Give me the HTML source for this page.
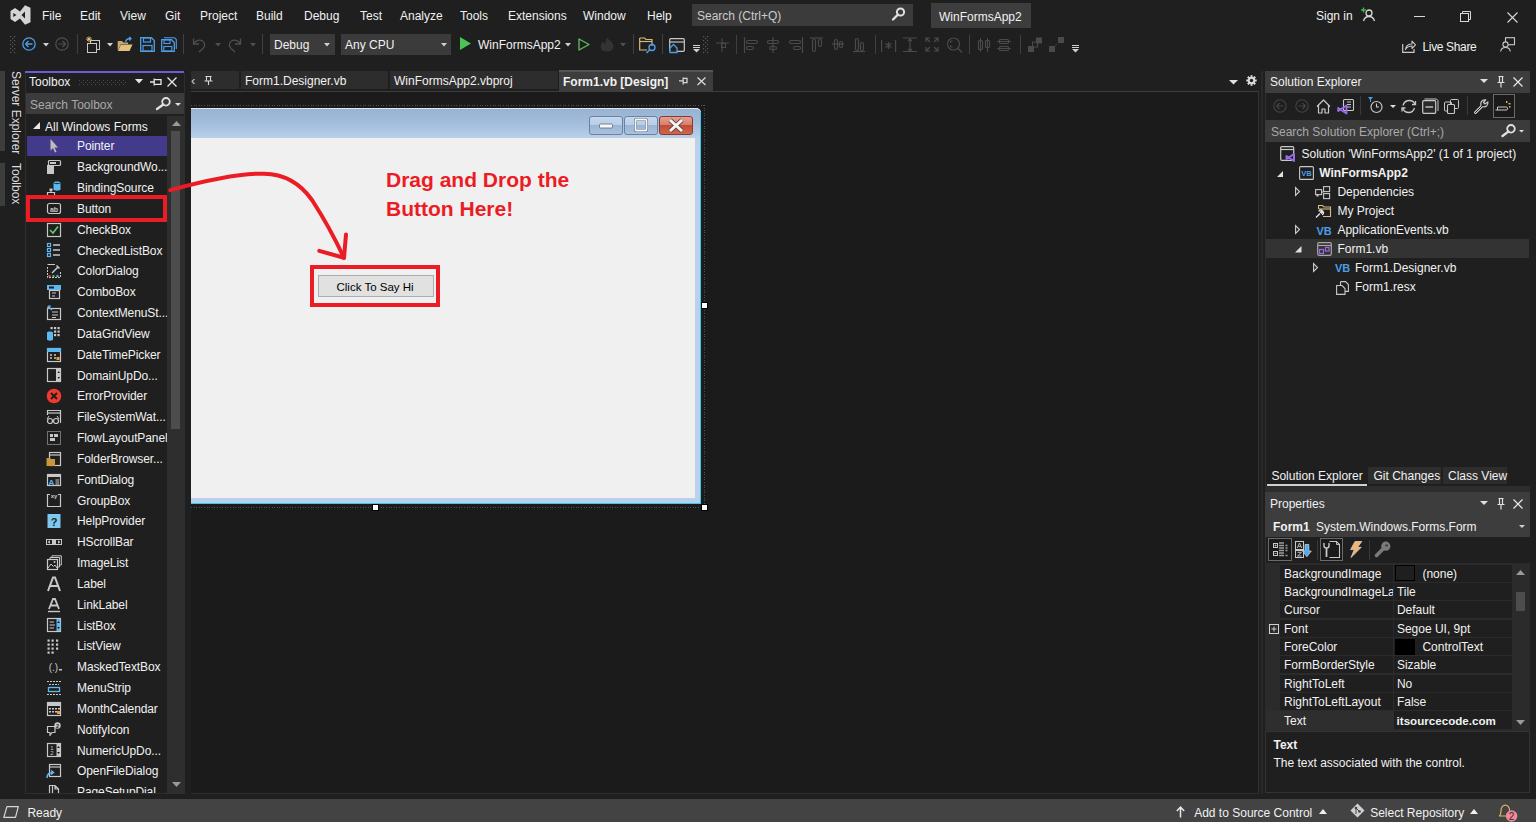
<!DOCTYPE html>
<html><head><meta charset="utf-8">
<style>
*{margin:0;padding:0;box-sizing:border-box}
html,body{width:1536px;height:822px;overflow:hidden;background:#1f1f1f}
body{position:relative;font-family:"Liberation Sans",sans-serif;font-size:12px;color:#f1f1f1}
.a{position:absolute}
.t{position:absolute;white-space:pre;line-height:16px;font-size:12px}
svg{position:absolute;overflow:visible}
</style></head><body>
<svg style="left:10px;top:5px" width="21" height="20" viewBox="0 0 21 20"><path d="M0.5 6 L5 3 L10 6.5 L15 0.3 L20.5 2.8 V17.2 L15 19.7 L10 13.5 L5 17 L0.5 14 Z M3.3 8 V12 L6.5 10 Z M15 6.5 L11.5 10 L15 13.5 Z" fill="#d4d4d4" fill-rule="evenodd"/></svg>
<span class="t" style="left:42px;top:7.84px">File</span>
<span class="t" style="left:80px;top:7.84px">Edit</span>
<span class="t" style="left:120px;top:7.84px">View</span>
<span class="t" style="left:165px;top:7.84px">Git</span>
<span class="t" style="left:200px;top:7.84px">Project</span>
<span class="t" style="left:256px;top:7.84px">Build</span>
<span class="t" style="left:304px;top:7.84px">Debug</span>
<span class="t" style="left:360px;top:7.84px">Test</span>
<span class="t" style="left:400px;top:7.84px">Analyze</span>
<span class="t" style="left:460px;top:7.84px">Tools</span>
<span class="t" style="left:508px;top:7.84px">Extensions</span>
<span class="t" style="left:583px;top:7.84px">Window</span>
<span class="t" style="left:647px;top:7.84px">Help</span>
<div class="a" style="left:692px;top:4px;width:221px;height:22px;background:#3b3b3b;"></div>
<span class="t" style="left:697px;top:7.84px;color:#cccccc">Search (Ctrl+Q)</span>
<svg style="left:891px;top:7px" width="15" height="14" viewBox="0 0 15 14"><circle cx="9.5" cy="5" r="3.6" fill="none" stroke="#e0e0e0" stroke-width="2"/><path d="M7 7.5 L2 12.5" stroke="#e0e0e0" stroke-width="2.4" stroke-linecap="round"/></svg>
<div class="a" style="left:931px;top:3px;width:100px;height:25px;background:#3d3d3d;"></div>
<span class="t" style="left:939px;top:8.84px">WinFormsApp2</span>
<span class="t" style="left:1316px;top:7.84px">Sign in</span>
<svg style="left:1360px;top:6px" width="16" height="16" viewBox="0 0 16 16"><circle cx="9" cy="7" r="3" fill="none" stroke="#d8d8d8" stroke-width="1.3"/><path d="M3.5 15 C4.5 11.5 6.5 10.5 9 10.5 C11.5 10.5 13.5 11.5 14.5 15" fill="none" stroke="#d8d8d8" stroke-width="1.3"/><path d="M1 4 H6 M3.5 1.5 V6.5" stroke="#3dba4e" stroke-width="1.3"/></svg>
<div class="a" style="left:1414px;top:16px;width:11px;height:1px;background:#d8d8d8;"></div>
<svg style="left:1460px;top:11px" width="12" height="11" viewBox="0 0 12 11"><rect x="0.5" y="2.5" width="8" height="8" fill="none" stroke="#d8d8d8"/><path d="M2.5 2.5 V0.5 H10.5 V8.5 H8.5" fill="none" stroke="#d8d8d8"/></svg>
<svg style="left:1507px;top:12px" width="11" height="11" viewBox="0 0 11 11"><path d="M0.5 0.5 L10.5 10.5 M10.5 0.5 L0.5 10.5" stroke="#d8d8d8" stroke-width="1.1"/></svg>
<svg style="left:10px;top:36px" width="6" height="18" viewBox="0 0 6 18"><rect x="0" y="0" width="1.2" height="1.2" fill="#5a5a5a"/><rect x="4" y="0" width="1.2" height="1.2" fill="#5a5a5a"/><rect x="0" y="4" width="1.2" height="1.2" fill="#5a5a5a"/><rect x="4" y="4" width="1.2" height="1.2" fill="#5a5a5a"/><rect x="0" y="8" width="1.2" height="1.2" fill="#5a5a5a"/><rect x="4" y="8" width="1.2" height="1.2" fill="#5a5a5a"/><rect x="0" y="12" width="1.2" height="1.2" fill="#5a5a5a"/><rect x="4" y="12" width="1.2" height="1.2" fill="#5a5a5a"/><rect x="0" y="16" width="1.2" height="1.2" fill="#5a5a5a"/><rect x="4" y="16" width="1.2" height="1.2" fill="#5a5a5a"/><rect x="2" y="2" width="1.2" height="1.2" fill="#5a5a5a"/><rect x="2" y="6" width="1.2" height="1.2" fill="#5a5a5a"/><rect x="2" y="10" width="1.2" height="1.2" fill="#5a5a5a"/><rect x="2" y="14" width="1.2" height="1.2" fill="#5a5a5a"/></svg>
<svg style="left:22px;top:37px" width="14" height="14" viewBox="0 0 14 14"><circle cx="7" cy="7" r="6.2" fill="none" stroke="#4c9ee8" stroke-width="1.3"/><path d="M3.5 7 H10.5 M3.5 7 L6.5 4 M3.5 7 L6.5 10" stroke="#4c9ee8" stroke-width="1.3" fill="none"/></svg>
<svg style="left:43px;top:43px" width="6" height="4" viewBox="0 0 6 4"><path d="M0 0 H6 L3 3.5 Z" fill="#d0d0d0"/></svg>
<svg style="left:55px;top:37px" width="14" height="14" viewBox="0 0 14 14"><circle cx="7" cy="7" r="6.2" fill="none" stroke="#4f4f4f" stroke-width="1.2"/><path d="M3.5 7 H10.5 M10.5 7 L7.5 4 M10.5 7 L7.5 10" stroke="#4f4f4f" stroke-width="1.2" fill="none"/></svg>
<div class="a" style="left:77px;top:34px;width:1px;height:20px;background:#404040;"></div>
<svg style="left:85px;top:36px" width="17" height="17" viewBox="0 0 17 17"><rect x="5.5" y="4.5" width="9" height="9" fill="#1f1f1f" stroke="#c8c8c8"/><rect x="2.5" y="7.5" width="9" height="9" fill="#1f1f1f" stroke="#c8c8c8"/><path d="M4 0.5 V6 M1.2 3.2 H6.8 M2 1.2 L6 5.2 M6 1.2 L2 5.2" stroke="#e8c36a" stroke-width="1"/></svg>
<svg style="left:107px;top:43px" width="6" height="4" viewBox="0 0 6 4"><path d="M0 0 H6 L3 3.5 Z" fill="#d0d0d0"/></svg>
<svg style="left:117px;top:37px" width="16" height="15" viewBox="0 0 16 15"><path d="M0.7 4 H5 L6.5 5.5 H11 V7 H4 L1 13.5 H0.7 Z" fill="#c9a86b"/><path d="M1 14 L4 7.5 H15.5 L12.5 14 Z" fill="#e2c07f"/><path d="M8.5 5 C9 2.5 11 1.5 13.5 1.5 M12 0 L14 1.5 L12.5 3.5" fill="none" stroke="#4c9ee8" stroke-width="1.3"/></svg>
<svg style="left:140px;top:37px" width="15" height="15" viewBox="0 0 15 15"><path d="M0.7 0.7 H11.5 L14.3 3.5 V14.3 H0.7 Z" fill="none" stroke="#4c9ee8" stroke-width="1.3"/><rect x="3.5" y="1" width="7" height="4" fill="none" stroke="#4c9ee8" stroke-width="1.2"/><rect x="3" y="8.5" width="9" height="5.5" fill="none" stroke="#4c9ee8" stroke-width="1.2"/></svg>
<svg style="left:161px;top:37px" width="16" height="15" viewBox="0 0 16 15"><path d="M3 0.7 H13.5 L15.3 2.5 V12" fill="none" stroke="#4c9ee8" stroke-width="1.1"/><path d="M0.7 2.7 H10.5 L13.3 5.5 V14.3 H0.7 Z" fill="none" stroke="#4c9ee8" stroke-width="1.3"/><rect x="3" y="3" width="6" height="3.5" fill="none" stroke="#4c9ee8" stroke-width="1.1"/><rect x="2.8" y="9.5" width="8" height="4.5" fill="none" stroke="#4c9ee8" stroke-width="1.1"/></svg>
<div class="a" style="left:183px;top:34px;width:1px;height:20px;background:#404040;"></div>
<svg style="left:192px;top:37px" width="14" height="15" viewBox="0 0 14 15"><path d="M1.5 1.5 V7 H7" fill="none" stroke="#4f4f4f" stroke-width="1.3"/><path d="M1.5 7 C4 3 8 2.5 10.5 4 C13.5 6 13 9.5 11 11.5 L7 15" fill="none" stroke="#4f4f4f" stroke-width="1.3"/></svg>
<svg style="left:215px;top:43px" width="6" height="4" viewBox="0 0 6 4"><path d="M0 0 H6 L3 3.5 Z" fill="#4f4f4f"/></svg>
<svg style="left:228px;top:37px" width="14" height="15" viewBox="0 0 14 15"><path d="M12.5 1.5 V7 H7" fill="none" stroke="#4f4f4f" stroke-width="1.3"/><path d="M12.5 7 C10 3 6 2.5 3.5 4 C0.5 6 1 9.5 3 11.5 L7 15" fill="none" stroke="#4f4f4f" stroke-width="1.3"/></svg>
<svg style="left:250px;top:43px" width="6" height="4" viewBox="0 0 6 4"><path d="M0 0 H6 L3 3.5 Z" fill="#4f4f4f"/></svg>
<div class="a" style="left:262px;top:34px;width:1px;height:20px;background:#404040;"></div>
<div class="a" style="left:270px;top:34px;width:65px;height:21px;background:#3b3b3b;"></div>
<span class="t" style="left:274px;top:36.84px">Debug</span>
<svg style="left:324px;top:43px" width="6" height="4" viewBox="0 0 6 4"><path d="M0 0 H6 L3 3.5 Z" fill="#d0d0d0"/></svg>
<div class="a" style="left:341px;top:34px;width:110px;height:21px;background:#3b3b3b;"></div>
<span class="t" style="left:345px;top:36.84px">Any CPU</span>
<svg style="left:441px;top:43px" width="6" height="4" viewBox="0 0 6 4"><path d="M0 0 H6 L3 3.5 Z" fill="#d0d0d0"/></svg>
<svg style="left:460px;top:37px" width="11" height="13" viewBox="0 0 11 13"><path d="M0 0 L11 6.5 L0 13 Z" fill="#4cc453"/></svg>
<span class="t" style="left:478px;top:36.84px">WinFormsApp2</span>
<svg style="left:565px;top:43px" width="6" height="4" viewBox="0 0 6 4"><path d="M0 0 H6 L3 3.5 Z" fill="#d0d0d0"/></svg>
<svg style="left:578px;top:38px" width="12" height="13" viewBox="0 0 12 13"><path d="M1 1 L11 6.5 L1 12 Z" fill="none" stroke="#5cbf62" stroke-width="1.3" stroke-linejoin="round"/></svg>
<svg style="left:600px;top:37px" width="14" height="15" viewBox="0 0 14 15"><path d="M7 0.5 C9 3 13.5 5.5 13.5 9.5 C13.5 12.5 11 14.5 7 14.5 C3 14.5 0.5 12.5 0.5 9.5 C0.5 7 2.5 5 3.5 4 C3.5 6 4.5 7 5.5 7 C5.5 4.5 6 2.5 7 0.5 Z" fill="#333"/></svg>
<svg style="left:620px;top:43px" width="6" height="4" viewBox="0 0 6 4"><path d="M0 0 H6 L3 3.5 Z" fill="#4f4f4f"/></svg>
<div class="a" style="left:633px;top:34px;width:1px;height:20px;background:#404040;"></div>
<svg style="left:639px;top:37px" width="18" height="16" viewBox="0 0 18 16"><path d="M0.7 1 H5.5 L7 2.5 H13 V9" fill="none" stroke="#d8bb7e" stroke-width="1.2"/><path d="M0.7 1 V13 H8" fill="none" stroke="#d8bb7e" stroke-width="1.2"/><path d="M0.7 4.5 H13" stroke="#d8bb7e" stroke-width="1.2"/><circle cx="13" cy="10.5" r="3" fill="none" stroke="#4c9ee8" stroke-width="1.4"/><path d="M11 12.5 L7.5 16" stroke="#4c9ee8" stroke-width="1.6"/></svg>
<div class="a" style="left:662px;top:34px;width:1px;height:20px;background:#404040;"></div>
<svg style="left:669px;top:38px" width="16" height="15" viewBox="0 0 16 15"><rect x="0.7" y="0.7" width="14.6" height="12.6" rx="1" fill="none" stroke="#c8c8c8" stroke-width="1.2"/><path d="M0.7 4 H15.3" stroke="#c8c8c8" stroke-width="1.2"/><path d="M1 10 L4.5 6.5 L8 10 V14.5 H1 Z" fill="#1f1f1f" stroke="#4c9ee8" stroke-width="1.3"/></svg>
<svg style="left:693px;top:45px" width="7" height="8" viewBox="0 0 7 8"><path d="M0 0.5 H7 M0 2.5 H7" stroke="#d0d0d0" stroke-width="1"/><path d="M0 4 H7 L3.5 7.5 Z" fill="#d0d0d0"/></svg>
<svg style="left:703px;top:36px" width="6" height="18" viewBox="0 0 6 18"><rect x="0" y="0" width="1.2" height="1.2" fill="#5a5a5a"/><rect x="4" y="0" width="1.2" height="1.2" fill="#5a5a5a"/><rect x="0" y="4" width="1.2" height="1.2" fill="#5a5a5a"/><rect x="4" y="4" width="1.2" height="1.2" fill="#5a5a5a"/><rect x="0" y="8" width="1.2" height="1.2" fill="#5a5a5a"/><rect x="4" y="8" width="1.2" height="1.2" fill="#5a5a5a"/><rect x="0" y="12" width="1.2" height="1.2" fill="#5a5a5a"/><rect x="4" y="12" width="1.2" height="1.2" fill="#5a5a5a"/><rect x="0" y="16" width="1.2" height="1.2" fill="#5a5a5a"/><rect x="4" y="16" width="1.2" height="1.2" fill="#5a5a5a"/><rect x="2" y="2" width="1.2" height="1.2" fill="#5a5a5a"/><rect x="2" y="6" width="1.2" height="1.2" fill="#5a5a5a"/><rect x="2" y="10" width="1.2" height="1.2" fill="#5a5a5a"/><rect x="2" y="14" width="1.2" height="1.2" fill="#5a5a5a"/></svg>
<svg style="left:716px;top:38px" width="13" height="14" viewBox="0 0 13 14"><path d="M0 5 H13 M6 0 V14" stroke="#4a4a4a"/><rect x="5.5" y="5.5" width="4" height="4" fill="none" stroke="#4a4a4a"/></svg>
<div class="a" style="left:736px;top:35px;width:1px;height:19px;background:#404040;"></div>
<svg style="left:744px;top:37px" width="16" height="16" viewBox="0 0 16 16"><path d="M0.5 0 V16" stroke="#4a4a4a" stroke-width="1.2"/><rect x="2.5" y="3.5" width="11" height="3" rx="1.5" fill="none" stroke="#4a4a4a" stroke-width="1.2"/><rect x="2.5" y="9.5" width="7" height="3" rx="1.5" fill="none" stroke="#4a4a4a" stroke-width="1.2"/></svg>
<svg style="left:766px;top:37px" width="16" height="16" viewBox="0 0 16 16"><path d="M7 0 V16" stroke="#4a4a4a" stroke-width="1.2"/><rect x="1.5" y="3.5" width="11" height="3" rx="1.5" fill="none" stroke="#4a4a4a" stroke-width="1.2"/><rect x="3.5" y="9.5" width="7" height="3" rx="1.5" fill="none" stroke="#4a4a4a" stroke-width="1.2"/></svg>
<svg style="left:788px;top:37px" width="16" height="16" viewBox="0 0 16 16"><path d="M14.5 0 V16" stroke="#4a4a4a" stroke-width="1.2"/><rect x="1.5" y="3.5" width="11" height="3" rx="1.5" fill="none" stroke="#4a4a4a" stroke-width="1.2"/><rect x="5.5" y="9.5" width="7" height="3" rx="1.5" fill="none" stroke="#4a4a4a" stroke-width="1.2"/></svg>
<svg style="left:810px;top:37px" width="16" height="16" viewBox="0 0 16 16"><path d="M0 1 H13" stroke="#4a4a4a" stroke-width="1.2"/><rect x="2.5" y="2.5" width="3" height="12" rx="1.5" fill="none" stroke="#4a4a4a" stroke-width="1.2"/><rect x="8.5" y="2.5" width="3" height="7" rx="1.5" fill="none" stroke="#4a4a4a" stroke-width="1.2"/></svg>
<svg style="left:832px;top:37px" width="16" height="16" viewBox="0 0 16 16"><path d="M0 7 H12" stroke="#4a4a4a" stroke-width="1.2"/><rect x="2.5" y="2.5" width="3" height="10" rx="1.5" fill="none" stroke="#4a4a4a" stroke-width="1.2"/><rect x="7.5" y="4.5" width="3" height="6" rx="1.5" fill="none" stroke="#4a4a4a" stroke-width="1.2"/></svg>
<svg style="left:853px;top:37px" width="16" height="16" viewBox="0 0 16 16"><path d="M0 14.5 H12" stroke="#4a4a4a" stroke-width="1.2"/><rect x="2.5" y="1.5" width="3" height="12" rx="1.5" fill="none" stroke="#4a4a4a" stroke-width="1.2"/><rect x="7.5" y="5.5" width="3" height="8" rx="1.5" fill="none" stroke="#4a4a4a" stroke-width="1.2"/></svg>
<div class="a" style="left:875px;top:35px;width:1px;height:19px;background:#404040;"></div>
<svg style="left:881px;top:37px" width="16" height="16" viewBox="0 0 16 16"><path d="M0.6 3 V15 M14.6 3 V15" stroke="#4a4a4a" stroke-width="1.2"/><path d="M7.5 5 V12 M4.5 6.5 L10.5 10.5 M10.5 6.5 L4.5 10.5" stroke="#4a4a4a" stroke-width="1.3"/></svg>
<svg style="left:903px;top:37px" width="16" height="16" viewBox="0 0 16 16"><path d="M0 1 H14 M0 14.5 H14 M7 2 V14 M5 4 L7 2 L9 4 M5 12 L7 14 L9 12" fill="none" stroke="#4a4a4a" stroke-width="1.2"/></svg>
<svg style="left:925px;top:37px" width="16" height="16" viewBox="0 0 16 16"><path d="M1 5 V1 H5 M1 1 L5 5 M13 5 V1 H9 M13 1 L9 5 M1 10 V14 H5 M1 14 L5 10 M13 10 V14 H9 M13 14 L9 10" fill="none" stroke="#4a4a4a" stroke-width="1.2"/></svg>
<svg style="left:947px;top:37px" width="16" height="16" viewBox="0 0 16 16"><circle cx="6.5" cy="7" r="6" fill="none" stroke="#4a4a4a" stroke-width="1.2"/><path d="M11 11.5 L15 15.5" stroke="#4a4a4a" stroke-width="1.4"/><path d="M3.5 6 V4 H5.5 M9.5 4 V4 H9.5 M3.5 8 V10 H5.5" fill="none" stroke="#4a4a4a"/></svg>
<div class="a" style="left:969px;top:35px;width:1px;height:19px;background:#404040;"></div>
<svg style="left:978px;top:37px" width="16" height="16" viewBox="0 0 16 16"><rect x="0.5" y="3.5" width="4" height="9" rx="1" fill="none" stroke="#4a4a4a" stroke-width="1.2"/><rect x="7.5" y="3.5" width="4" height="7" rx="1" fill="none" stroke="#4a4a4a" stroke-width="1.2"/><path d="M2.5 1 V15 M9.5 1 V15" stroke="#4a4a4a"/></svg>
<svg style="left:997px;top:37px" width="16" height="16" viewBox="0 0 16 16"><rect x="2.5" y="2.5" width="9" height="4" rx="1" fill="none" stroke="#4a4a4a" stroke-width="1.2"/><rect x="2.5" y="9.5" width="9" height="4" rx="1" fill="none" stroke="#4a4a4a" stroke-width="1.2"/><path d="M0 4.5 H14 M0 11.5 H14" stroke="#4a4a4a"/></svg>
<div class="a" style="left:1020px;top:35px;width:1px;height:19px;background:#404040;"></div>
<svg style="left:1028px;top:37px" width="16" height="16" viewBox="0 0 16 16"><rect x="0" y="9" width="6" height="6" fill="#4a4a4a"/><rect x="8" y="0.5" width="6" height="6" fill="#4a4a4a"/><rect x="4.5" y="5" width="5" height="5" fill="none" stroke="#4a4a4a"/></svg>
<svg style="left:1049px;top:37px" width="16" height="16" viewBox="0 0 16 16"><rect x="0" y="9" width="6" height="6" fill="#4a4a4a"/><rect x="9" y="0" width="6" height="6" fill="#4a4a4a"/><path d="M6 9 L9 6" stroke="#4a4a4a" stroke-dasharray="1 1"/></svg>
<svg style="left:1072px;top:45px" width="7" height="8" viewBox="0 0 7 8"><path d="M0 0.5 H7 M0 2.5 H7" stroke="#d0d0d0" stroke-width="1"/><path d="M0 4 H7 L3.5 7.5 Z" fill="#d0d0d0"/></svg>
<svg style="left:1402px;top:39px" width="14" height="14" viewBox="0 0 14 14"><path d="M0.7 5 V13.3 H12 V10" fill="none" stroke="#c8c8c8" stroke-width="1.2"/><path d="M3.5 10.5 C4 6.5 6.5 5 10 5 V2 L13.5 5.8 L10 9.5 V7 C7 7 5 8 3.5 10.5 Z" fill="none" stroke="#c8c8c8" stroke-width="1.1" stroke-linejoin="round"/></svg>
<span class="t" style="left:1422.5px;top:39.04px;letter-spacing:-0.35px">Live Share</span>
<svg style="left:1500px;top:37px" width="15" height="15" viewBox="0 0 15 15"><rect x="5.5" y="0.7" width="9" height="7" fill="none" stroke="#c8c8c8" stroke-width="1.1"/><circle cx="5.5" cy="7.5" r="2.6" fill="#1f1f1f" stroke="#c8c8c8" stroke-width="1.1"/><path d="M0.7 14.5 C1 11.5 3 10.5 5.5 10.5 C8 10.5 10 11.5 10.3 14.5" fill="none" stroke="#c8c8c8" stroke-width="1.1"/></svg>
<div class="a" style="left:0px;top:71px;width:5px;height:80px;background:#3d3d3d;"></div>
<div class="a" style="left:0px;top:163px;width:5px;height:43px;background:#3d3d3d;"></div>
<span class="t" style="left:0px;top:-12.16px;left:11.5px;top:70.5px;transform-origin:0 0;transform:translate(12px,0) rotate(90deg);color:#dcdcdc">Server Explorer</span>
<span class="t" style="left:0px;top:-12.16px;left:11.5px;top:162.5px;transform-origin:0 0;transform:translate(12px,0) rotate(90deg);color:#dcdcdc">Toolbox</span>
<div class="a" style="left:25px;top:71px;width:159px;height:2px;background:#6c5dd6;"></div>
<div class="a" style="left:25px;top:73px;width:160px;height:721px;background:transparent;border:1px solid #2e2e2e;border-top:none"></div>
<span class="t" style="left:29px;top:73.84px">Toolbox</span>
<svg style="left:79px;top:80px" width="48" height="5" viewBox="0 0 48 5"><rect x="0" y="0" width="1" height="1" fill="#4a4a4a"/><rect x="0" y="4" width="1" height="1" fill="#4a4a4a"/><rect x="2" y="2" width="1" height="1" fill="#4a4a4a"/><rect x="4" y="0" width="1" height="1" fill="#4a4a4a"/><rect x="4" y="4" width="1" height="1" fill="#4a4a4a"/><rect x="6" y="2" width="1" height="1" fill="#4a4a4a"/><rect x="8" y="0" width="1" height="1" fill="#4a4a4a"/><rect x="8" y="4" width="1" height="1" fill="#4a4a4a"/><rect x="10" y="2" width="1" height="1" fill="#4a4a4a"/><rect x="12" y="0" width="1" height="1" fill="#4a4a4a"/><rect x="12" y="4" width="1" height="1" fill="#4a4a4a"/><rect x="14" y="2" width="1" height="1" fill="#4a4a4a"/><rect x="16" y="0" width="1" height="1" fill="#4a4a4a"/><rect x="16" y="4" width="1" height="1" fill="#4a4a4a"/><rect x="18" y="2" width="1" height="1" fill="#4a4a4a"/><rect x="20" y="0" width="1" height="1" fill="#4a4a4a"/><rect x="20" y="4" width="1" height="1" fill="#4a4a4a"/><rect x="22" y="2" width="1" height="1" fill="#4a4a4a"/><rect x="24" y="0" width="1" height="1" fill="#4a4a4a"/><rect x="24" y="4" width="1" height="1" fill="#4a4a4a"/><rect x="26" y="2" width="1" height="1" fill="#4a4a4a"/><rect x="28" y="0" width="1" height="1" fill="#4a4a4a"/><rect x="28" y="4" width="1" height="1" fill="#4a4a4a"/><rect x="30" y="2" width="1" height="1" fill="#4a4a4a"/><rect x="32" y="0" width="1" height="1" fill="#4a4a4a"/><rect x="32" y="4" width="1" height="1" fill="#4a4a4a"/><rect x="34" y="2" width="1" height="1" fill="#4a4a4a"/><rect x="36" y="0" width="1" height="1" fill="#4a4a4a"/><rect x="36" y="4" width="1" height="1" fill="#4a4a4a"/><rect x="38" y="2" width="1" height="1" fill="#4a4a4a"/><rect x="40" y="0" width="1" height="1" fill="#4a4a4a"/><rect x="40" y="4" width="1" height="1" fill="#4a4a4a"/><rect x="42" y="2" width="1" height="1" fill="#4a4a4a"/><rect x="44" y="0" width="1" height="1" fill="#4a4a4a"/><rect x="44" y="4" width="1" height="1" fill="#4a4a4a"/><rect x="46" y="2" width="1" height="1" fill="#4a4a4a"/></svg>
<svg style="left:135px;top:79px" width="8" height="4.5" viewBox="0 0 8 4.5"><path d="M0 0 H8 L4 4.5 Z" fill="#e8e8e8"/></svg>
<svg style="left:149.5px;top:77.5px" width="12" height="8" viewBox="0 0 12 8"><path d="M0 4 H4 M4.2 0.5 V7.5" fill="none" stroke="#e8e8e8" stroke-width="1.3"/><path d="M4.5 1.6 H11 V6.4 H4.5" fill="none" stroke="#e8e8e8" stroke-width="1.3"/><path d="M6 3 H10 V4.3 H6 Z" fill="#1f1f1f"/></svg>
<svg style="left:167px;top:77px" width="10" height="10" viewBox="0 0 10 10"><path d="M0.5 0.5 L9.5 9.5 M9.5 0.5 L0.5 9.5" stroke="#e8e8e8" stroke-width="1.3"/></svg>
<div class="a" style="left:26px;top:93px;width:158px;height:21px;background:#3b3b3b;"></div>
<span class="t" style="left:30px;top:96.84px;color:#a9a9a9">Search Toolbox</span>
<svg style="left:155px;top:97px" width="16" height="13" viewBox="0 0 16 13"><circle cx="11" cy="4.8" r="3.8" fill="none" stroke="#e0e0e0" stroke-width="1.8"/><path d="M8.3 7.6 L2 12" stroke="#e0e0e0" stroke-width="2.4" stroke-linecap="round"/></svg>
<svg style="left:175px;top:102.5px" width="6" height="3" viewBox="0 0 6 3"><path d="M0 0 H6 L3 3 Z" fill="#e0e0e0"/></svg>
<span class="t" style="left:45px;top:118.84px">All Windows Forms</span>
<svg style="left:33px;top:122px" width="7" height="7" viewBox="0 0 7 7"><path d="M7 0 V7 H0 Z" fill="#e8e8e8"/></svg>
<div class="a" style="left:26px;top:116px;width:141px;height:677px;overflow:hidden">
<div class="a" style="left:1px;top:20px;width:140px;height:20px;background:#433a8c;"></div>
<span class="t" style="left:51px;top:22.44px;letter-spacing:-0.1px">Pointer</span>
<svg style="left:20px;top:22px" width="16" height="16" viewBox="0 0 16 16"><path d="M4.5 1 V12.5 L7 10 L9 14.5 L10.5 13.8 L8.5 9.5 H12 Z" fill="#bdbdbd"/></svg>
<span class="t" style="left:51px;top:43.27px;letter-spacing:-0.1px">BackgroundWo...</span>
<svg style="left:20px;top:43px" width="16" height="16" viewBox="0 0 16 16"><rect x="2.5" y="1.5" width="12" height="5" rx="1" fill="none" stroke="#c8c8c8" stroke-width="1.2"/><rect x="4" y="3" width="6" height="2" fill="#c8c8c8"/><rect x="1" y="6" width="7" height="9" fill="#c8c8c8"/></svg>
<span class="t" style="left:51px;top:64.11px;letter-spacing:-0.1px">BindingSource</span>
<svg style="left:20px;top:64px" width="16" height="16" viewBox="0 0 16 16"><path d="M7.5 2.5 C7.5 1 14.5 1 14.5 2.5 V9.5 C14.5 11 7.5 11 7.5 9.5 Z" fill="#5cb8f0"/><path d="M7.5 2.5 C7.5 4 14.5 4 14.5 2.5" stroke="#1f1f1f" fill="none"/><path d="M5 10 V12 M1.5 15 V12.5 H8.5 V15" stroke="#c8c8c8" stroke-width="1.2" fill="none"/><rect x="3.5" y="8.5" width="3" height="2.5" fill="#c8c8c8"/></svg>
<span class="t" style="left:51px;top:84.94px;letter-spacing:-0.1px">Button</span>
<svg style="left:20px;top:85px" width="16" height="16" viewBox="0 0 16 16"><rect x="1.5" y="2.5" width="13" height="10" rx="2" fill="none" stroke="#c8c8c8" stroke-width="1.2"/><text x="8" y="10.5" font-size="7" font-family="Liberation Sans" fill="#c8c8c8" text-anchor="middle" font-weight="bold">ab</text></svg>
<span class="t" style="left:51px;top:105.77px;letter-spacing:-0.1px">CheckBox</span>
<svg style="left:20px;top:106px" width="16" height="16" viewBox="0 0 16 16"><rect x="1.5" y="1.5" width="13" height="13" fill="none" stroke="#c8c8c8" stroke-width="1.2"/><path d="M4 8 L7 11 L12 4.5" stroke="#5fcf6a" stroke-width="1.6" fill="none"/></svg>
<span class="t" style="left:51px;top:126.61px;letter-spacing:-0.1px">CheckedListBox</span>
<svg style="left:20px;top:126px" width="16" height="16" viewBox="0 0 16 16"><rect x="1.5" y="1.5" width="3" height="3" fill="none" stroke="#5cb8f0" stroke-width="1.2"/><rect x="1.5" y="6.5" width="3" height="3" fill="none" stroke="#5cb8f0" stroke-width="1.2"/><rect x="1.5" y="11.5" width="3" height="3" fill="none" stroke="#5cb8f0" stroke-width="1.2"/><path d="M7 3 H14 M7 8 H14 M7 13 H14" stroke="#c8c8c8" stroke-width="1.6"/></svg>
<span class="t" style="left:51px;top:147.44px;letter-spacing:-0.1px">ColorDialog</span>
<svg style="left:20px;top:147px" width="16" height="16" viewBox="0 0 16 16"><path d="M1.5 4 V14.5 H14.5 V8" fill="none" stroke="#c8c8c8" stroke-dasharray="2 1"/><path d="M1.5 1.5 H9" stroke="#c8c8c8"/><path d="M6 10 L12 4 M10.5 2.5 L13.5 5.5" stroke="#c8c8c8" stroke-width="1.5"/><rect x="2.5" y="12" width="2" height="2" fill="#e05050"/><rect x="6.5" y="12" width="2" height="2" fill="#50c050"/><rect x="10.5" y="12" width="2" height="2" fill="#5cb8f0"/></svg>
<span class="t" style="left:51px;top:168.27px;letter-spacing:-0.1px">ComboBox</span>
<svg style="left:20px;top:168px" width="16" height="16" viewBox="0 0 16 16"><rect x="1" y="1" width="14" height="5" fill="#5cb8f0"/><rect x="3" y="2.5" width="5" height="2" fill="#1f1f1f"/><rect x="3.5" y="6.5" width="10" height="8" fill="none" stroke="#c8c8c8" stroke-width="1.2"/><path d="M6 9 H10 M6 12 H9" stroke="#c8c8c8"/></svg>
<span class="t" style="left:51px;top:189.11px;letter-spacing:-0.1px">ContextMenuSt...</span>
<svg style="left:20px;top:189px" width="16" height="16" viewBox="0 0 16 16"><rect x="1.5" y="3.5" width="13" height="11" fill="none" stroke="#c8c8c8" stroke-width="1.2"/><path d="M6 7 H12 M6 10 H12 M6 12.5 H10" stroke="#c8c8c8"/><path d="M2 1 L6 5 M2 1 V4 M2 1 H5" stroke="#5cb8f0" stroke-width="1.2" fill="none"/></svg>
<span class="t" style="left:51px;top:209.94px;letter-spacing:-0.1px">DataGridView</span>
<svg style="left:20px;top:210px" width="16" height="16" viewBox="0 0 16 16"><path d="M1 6.5 C1 5 7 5 7 6.5 V13.5 C7 15 1 15 1 13.5 Z" fill="#5cb8f0"/><rect x="8" y="1" width="2.2" height="2.2" fill="#c8c8c8"/><rect x="8" y="4.5" width="2.2" height="2.2" fill="#c8c8c8"/><rect x="8" y="8" width="2.2" height="2.2" fill="#c8c8c8"/><rect x="11.5" y="1" width="2.2" height="2.2" fill="#c8c8c8"/><rect x="11.5" y="4.5" width="2.2" height="2.2" fill="#c8c8c8"/><rect x="11.5" y="8" width="2.2" height="2.2" fill="#c8c8c8"/><rect x="4.5" y="1" width="2.2" height="2.2" fill="#c8c8c8"/></svg>
<span class="t" style="left:51px;top:230.77px;letter-spacing:-0.1px">DateTimePicker</span>
<svg style="left:20px;top:231px" width="16" height="16" viewBox="0 0 16 16"><rect x="1.5" y="1.5" width="13" height="13" fill="none" stroke="#c8c8c8" stroke-width="1.2"/><rect x="1" y="1" width="14" height="4" fill="#5cb8f0"/><path d="M4 8 H6 M8 8 H10 M4 11 H6 M8 11 H10" stroke="#c8c8c8" stroke-width="1.4"/><rect x="10.5" y="10" width="3" height="3" fill="#f0a030"/></svg>
<span class="t" style="left:51px;top:251.60px;letter-spacing:-0.1px">DomainUpDo...</span>
<svg style="left:20px;top:251px" width="16" height="16" viewBox="0 0 16 16"><rect x="1.5" y="1.5" width="13" height="13" fill="none" stroke="#c8c8c8" stroke-width="1.2"/><path d="M10.5 1.5 V14.5" stroke="#c8c8c8"/><rect x="11" y="2" width="3.5" height="12" fill="#c8c8c8"/><path d="M11.5 6 L12.75 4 L14 6 Z M11.5 10 L12.75 12 L14 10 Z" fill="#1f1f1f"/></svg>
<span class="t" style="left:51px;top:272.44px;letter-spacing:-0.1px">ErrorProvider</span>
<svg style="left:20px;top:272px" width="16" height="16" viewBox="0 0 16 16"><circle cx="8" cy="8" r="7.3" fill="#f03a2e"/><path d="M5 5 L11 11 M11 5 L5 11" stroke="#1f1f1f" stroke-width="2"/></svg>
<span class="t" style="left:51px;top:293.27px;letter-spacing:-0.1px">FileSystemWat...</span>
<svg style="left:20px;top:293px" width="16" height="16" viewBox="0 0 16 16"><path d="M1.5 6 V1.5 H14.5 V14" fill="none" stroke="#c8c8c8" stroke-width="1.2"/><path d="M1.5 4 H14.5" stroke="#c8c8c8" stroke-width="1.2"/><circle cx="4" cy="12" r="2.5" fill="none" stroke="#c8c8c8" stroke-width="1.2"/><circle cx="10" cy="12" r="2.5" fill="none" stroke="#c8c8c8" stroke-width="1.2"/><path d="M1 10 L3 7 M13 10 L11 7 M6.5 12 H7.5" stroke="#c8c8c8"/></svg>
<span class="t" style="left:51px;top:314.10px;letter-spacing:-0.1px">FlowLayoutPanel</span>
<svg style="left:20px;top:314px" width="16" height="16" viewBox="0 0 16 16"><rect x="1.5" y="1.5" width="13" height="13" fill="none" stroke="#c8c8c8" stroke-dasharray="1 1"/><rect x="4" y="4" width="3" height="3" fill="#c8c8c8"/><rect x="8" y="4" width="4" height="3" fill="#c8c8c8"/><rect x="4" y="8" width="5" height="3" fill="#c8c8c8"/></svg>
<span class="t" style="left:51px;top:334.94px;letter-spacing:-0.1px">FolderBrowser...</span>
<svg style="left:20px;top:335px" width="16" height="16" viewBox="0 0 16 16"><rect x="3.5" y="1.5" width="11" height="13" fill="none" stroke="#c8c8c8" stroke-width="1.2"/><path d="M3.5 4 H14.5" stroke="#c8c8c8" stroke-width="1.2"/><path d="M0.5 7 H4 L5 8 H9 V15 H0.5 Z" fill="#c8963c"/></svg>
<span class="t" style="left:51px;top:355.77px;letter-spacing:-0.1px">FontDialog</span>
<svg style="left:20px;top:356px" width="16" height="16" viewBox="0 0 16 16"><rect x="1.5" y="2.5" width="13" height="11" fill="none" stroke="#c8c8c8" stroke-width="1.2"/><rect x="2" y="3" width="12" height="2" fill="#c8c8c8"/><text x="5.5" y="12.5" font-size="8" font-family="Liberation Sans" font-weight="bold" fill="#5cb8f0" text-anchor="middle">A</text><path d="M9.5 8 H13 M9.5 10 H13 M9.5 12 H13" stroke="#c8c8c8"/></svg>
<span class="t" style="left:51px;top:376.60px;letter-spacing:-0.1px">GroupBox</span>
<svg style="left:20px;top:376px" width="16" height="16" viewBox="0 0 16 16"><path d="M4 2.5 H1.5 V14.5 H14.5 V2.5 H12" fill="none" stroke="#c8c8c8" stroke-width="1.2"/><text x="8" y="6" font-size="6" font-family="Liberation Sans" font-weight="bold" fill="#c8c8c8" text-anchor="middle">xy</text></svg>
<span class="t" style="left:51px;top:397.44px;letter-spacing:-0.1px">HelpProvider</span>
<svg style="left:20px;top:397px" width="16" height="16" viewBox="0 0 16 16"><rect x="1.5" y="1" width="13" height="14" fill="#7ec8f0"/><text x="8" y="12.5" font-size="11" font-family="Liberation Sans" font-weight="bold" fill="#1f1f1f" text-anchor="middle">?</text></svg>
<span class="t" style="left:51px;top:418.27px;letter-spacing:-0.1px">HScrollBar</span>
<svg style="left:20px;top:418px" width="16" height="16" viewBox="0 0 16 16"><rect x="0.5" y="5.5" width="15" height="5" fill="none" stroke="#c8c8c8" stroke-width="1"/><path d="M1.5 8 L4 6.2 V9.8 Z M14.5 8 L12 6.2 V9.8 Z" fill="#c8c8c8"/><rect x="6" y="6" width="4" height="4" fill="#c8c8c8"/></svg>
<span class="t" style="left:51px;top:439.10px;letter-spacing:-0.1px">ImageList</span>
<svg style="left:20px;top:439px" width="16" height="16" viewBox="0 0 16 16"><rect x="1.5" y="4.5" width="10" height="10" fill="none" stroke="#c8c8c8" stroke-width="1.2"/><path d="M4 4.5 V2.5 H13.5 V12 H11.5 M6 2.5 V0.8 H15.3 V10 H13.5" fill="none" stroke="#c8c8c8" stroke-width="1"/><path d="M2 13 L5 9 L7.5 11.5 L9 10 L11 13" fill="none" stroke="#c8c8c8"/><circle cx="8.5" cy="7" r="1" fill="#c8c8c8"/></svg>
<span class="t" style="left:51px;top:459.93px;letter-spacing:-0.1px">Label</span>
<svg style="left:20px;top:460px" width="16" height="16" viewBox="0 0 16 16"><path d="M2 15 L7 1.5 H9 L14 15 M4.5 10 H11.5" fill="none" stroke="#c8c8c8" stroke-width="2"/></svg>
<span class="t" style="left:51px;top:480.77px;letter-spacing:-0.1px">LinkLabel</span>
<svg style="left:20px;top:481px" width="16" height="16" viewBox="0 0 16 16"><path d="M3 12 L7 2 H9 L13 12 M5 8.5 H11" fill="none" stroke="#c8c8c8" stroke-width="1.8"/><path d="M2 14.5 H14" stroke="#c8c8c8" stroke-width="1.4"/></svg>
<span class="t" style="left:51px;top:501.60px;letter-spacing:-0.1px">ListBox</span>
<svg style="left:20px;top:501px" width="16" height="16" viewBox="0 0 16 16"><rect x="1.5" y="1.5" width="13" height="13" fill="none" stroke="#c8c8c8" stroke-width="1.2"/><path d="M3.5 5 H8 M3.5 8 H9 M3.5 11 H8" stroke="#c8c8c8" stroke-width="1.2"/><rect x="10.5" y="2" width="4" height="12" fill="#5cb8f0"/><path d="M11 6 L12.5 4 L14 6 Z M11 10 L12.5 12 L14 10 Z" fill="#1f1f1f"/></svg>
<span class="t" style="left:51px;top:522.43px;letter-spacing:-0.1px">ListView</span>
<svg style="left:20px;top:522px" width="16" height="16" viewBox="0 0 16 16"><rect x="1.5" y="1.5" width="2.2" height="2.2" fill="#c8c8c8"/><rect x="1.5" y="5.5" width="2.2" height="2.2" fill="#c8c8c8"/><rect x="1.5" y="9.5" width="2.2" height="2.2" fill="#c8c8c8"/><rect x="1.5" y="13.5" width="2.2" height="2.2" fill="#c8c8c8"/><rect x="5.5" y="1.5" width="2.2" height="2.2" fill="#c8c8c8"/><rect x="5.5" y="5.5" width="2.2" height="2.2" fill="#c8c8c8"/><rect x="5.5" y="9.5" width="2.2" height="2.2" fill="#c8c8c8"/><rect x="5.5" y="13.5" width="2.2" height="2.2" fill="#c8c8c8"/><rect x="10" y="1.5" width="2.2" height="2.2" fill="#c8c8c8"/><rect x="10" y="5.5" width="2.2" height="2.2" fill="#c8c8c8"/><rect x="10" y="9.5" width="2.2" height="2.2" fill="#c8c8c8"/></svg>
<span class="t" style="left:51px;top:543.27px;letter-spacing:-0.1px">MaskedTextBox</span>
<svg style="left:20px;top:543px" width="16" height="16" viewBox="0 0 16 16"><text x="7.5" y="11.5" font-size="10" font-family="Liberation Sans" fill="#c8c8c8" text-anchor="middle">(.)</text><rect x="13" y="10" width="3" height="1.5" fill="#c8c8c8"/></svg>
<span class="t" style="left:51px;top:564.10px;letter-spacing:-0.1px">MenuStrip</span>
<svg style="left:20px;top:564px" width="16" height="16" viewBox="0 0 16 16"><path d="M1 1.5 H15 M3 4.5 H13 M1 14.5 H15" stroke="#c8c8c8" stroke-width="1" stroke-dasharray="2 1"/><rect x="2.5" y="7.5" width="11" height="4" fill="none" stroke="#5cb8f0" stroke-width="1.3"/></svg>
<span class="t" style="left:51px;top:584.93px;letter-spacing:-0.1px">MonthCalendar</span>
<svg style="left:20px;top:585px" width="16" height="16" viewBox="0 0 16 16"><rect x="1.5" y="1.5" width="13" height="13" fill="none" stroke="#c8c8c8" stroke-width="1.2"/><rect x="1" y="1" width="14" height="4" fill="#c8c8c8"/><rect x="3" y="7" width="2" height="1.5" fill="#c8c8c8"/><rect x="3" y="10" width="2" height="1.5" fill="#c8c8c8"/><rect x="6" y="7" width="2" height="1.5" fill="#c8c8c8"/><rect x="6" y="10" width="2" height="1.5" fill="#c8c8c8"/><rect x="9" y="7" width="2" height="1.5" fill="#c8c8c8"/><rect x="9" y="10" width="2" height="1.5" fill="#c8c8c8"/><rect x="12" y="7" width="2" height="1.5" fill="#c8c8c8"/><rect x="12" y="10" width="2" height="1.5" fill="#c8c8c8"/><rect x="11" y="10" width="3" height="3" fill="#f0a030"/></svg>
<span class="t" style="left:51px;top:605.77px;letter-spacing:-0.1px">NotifyIcon</span>
<svg style="left:20px;top:606px" width="16" height="16" viewBox="0 0 16 16"><path d="M1.5 4.5 H9 V10.5 H6 L4 13.5 V10.5 H1.5 Z" fill="none" stroke="#c8c8c8" stroke-width="1.2" stroke-linejoin="round"/><circle cx="11.5" cy="3.5" r="3.2" fill="#c8c8c8"/><text x="11.5" y="5.6" font-size="5.5" font-family="Liberation Sans" font-weight="bold" fill="#1f1f1f" text-anchor="middle">2</text></svg>
<span class="t" style="left:51px;top:626.60px;letter-spacing:-0.1px">NumericUpDo...</span>
<svg style="left:20px;top:626px" width="16" height="16" viewBox="0 0 16 16"><rect x="1.5" y="1.5" width="13" height="13" fill="none" stroke="#c8c8c8" stroke-width="1.2"/><text x="6" y="7.5" font-size="6" font-family="Liberation Sans" fill="#c8c8c8" text-anchor="middle">1</text><text x="6" y="13" font-size="6" font-family="Liberation Sans" fill="#c8c8c8" text-anchor="middle">2</text><rect x="10.5" y="2" width="4" height="12" fill="#c8c8c8"/><path d="M11 6 L12.5 4 L14 6 Z M11 10 L12.5 12 L14 10 Z" fill="#1f1f1f"/></svg>
<span class="t" style="left:51px;top:647.43px;letter-spacing:-0.1px">OpenFileDialog</span>
<svg style="left:20px;top:647px" width="16" height="16" viewBox="0 0 16 16"><rect x="3.5" y="1.5" width="11" height="12" fill="none" stroke="#c8c8c8" stroke-width="1.2"/><path d="M3.5 4 H14.5" stroke="#c8c8c8" stroke-width="1.2"/><path d="M1 15 C1 11 3 9.5 7 9.5 M5 7.5 L7.5 9.5 L5 11.5" fill="none" stroke="#5cb8f0" stroke-width="1.5"/></svg>
<span class="t" style="left:51px;top:668.26px;letter-spacing:-0.1px">PageSetupDial</span>
<svg style="left:20px;top:668px" width="16" height="16" viewBox="0 0 16 16"><path d="M3.5 14.5 V1.5 H9 L12.5 5 V14.5 M6.5 1.5 V14.5 M9 1.5 V5 H12.5" fill="none" stroke="#c8c8c8" stroke-width="1.2"/></svg>
</div>
<div class="a" style="left:167px;top:116px;width:17px;height:677px;background:#2e2e2e;"></div>
<svg style="left:172px;top:121px" width="9" height="5" viewBox="0 0 9 5"><path d="M0 5 L4.5 0 L9 5 Z" fill="#9a9a9a"/></svg>
<div class="a" style="left:171px;top:131px;width:9px;height:298px;background:#4d4d4d;"></div>
<svg style="left:172px;top:782px" width="9" height="5" viewBox="0 0 9 5"><path d="M0 0 L4.5 5 L9 0 Z" fill="#9a9a9a"/></svg>
<div class="a" style="left:191px;top:92px;width:1067px;height:701px;background:#1b1b1b;"></div>
<div class="a" style="left:191px;top:71px;width:48px;height:18px;background:#2d2d2d;"></div>
<span class="t" style="left:191px;top:72.84px;color:#d0d0d0;font-size:13px">‹</span>
<svg style="left:204px;top:76px" width="9" height="9" viewBox="0 0 9 9"><path d="M1.5 0.5 H7.5 M2.5 0.5 V5 M6.5 0.5 V5 M0.5 5 H8.5 M4.5 5 V9" fill="none" stroke="#d8d8d8" stroke-width="1.1"/></svg>
<div class="a" style="left:241px;top:71px;width:147px;height:18px;background:#2d2d2d;"></div>
<span class="t" style="left:245px;top:73.04px">Form1.Designer.vb</span>
<div class="a" style="left:390px;top:71px;width:168px;height:18px;background:#2d2d2d;"></div>
<span class="t" style="left:394px;top:73.04px">WinFormsApp2.vbproj</span>
<div class="a" style="left:559px;top:70px;width:154px;height:22px;background:#3d3d3d;"></div>
<div class="a" style="left:559px;top:70px;width:154px;height:1.6px;background:#555555;"></div>
<span class="t" style="left:563px;top:73.54px;font-weight:bold">Form1.vb [Design]</span>
<svg style="left:678.7px;top:77.3px" width="9" height="8" viewBox="0 0 9 8"><path d="M0 3.8 H4 M4.2 0.5 V7.5" fill="none" stroke="#d8d8d8" stroke-width="1.3"/><path d="M4.5 1.3 H8 V5.7 H4.5" fill="none" stroke="#d8d8d8" stroke-width="1.3"/></svg>
<svg style="left:697.3px;top:77.3px" width="9" height="8.5" viewBox="0 0 9 8.5"><path d="M0.5 0.5 L8.5 8 M8.5 0.5 L0.5 8" stroke="#d8d8d8" stroke-width="1.3"/></svg>
<div class="a" style="left:191px;top:91px;width:1068px;height:1px;background:#3d3d3d;"></div>
<svg style="left:1229px;top:80px" width="9" height="5" viewBox="0 0 9 5"><path d="M0 0 H9 L4.5 4.5 Z" fill="#e0e0e0"/></svg>
<svg style="left:1246px;top:75px" width="11" height="11" viewBox="0 0 11 11"><path d="M5.5 0.3 V10.7 M0.3 5.5 H10.7 M1.8 1.8 L9.2 9.2 M9.2 1.8 L1.8 9.2" stroke="#dcdcdc" stroke-width="2"/><circle cx="5.5" cy="5.5" r="3.6" fill="#dcdcdc"/><circle cx="5.5" cy="5.5" r="1.7" fill="#1f1f1f"/></svg>
<div class="a" style="left:1258px;top:92px;width:1px;height:702px;background:#333333;"></div>
<div class="a" style="left:191px;top:793px;width:1068px;height:1px;background:#2e2e2e;"></div>
<div class="a" style="left:1261px;top:71px;width:2px;height:723px;background:#292929;"></div>
<div class="a" style="left:1265px;top:93px;width:1px;height:700px;background:#303030;"></div>
<div class="a" style="left:191px;top:105px;width:514px;height:1px;background:repeating-linear-gradient(90deg,#505050 0 1px,transparent 1px 2.6px);"></div>
<div class="a" style="left:704px;top:105px;width:1px;height:403px;background:repeating-linear-gradient(180deg,#505050 0 1px,transparent 1px 2.6px);"></div>
<div class="a" style="left:191px;top:507px;width:514px;height:1px;background:repeating-linear-gradient(90deg,#505050 0 1px,transparent 1px 2.6px);"></div>
<div class="a" style="left:191px;top:108px;width:510px;height:396px;background:#b9d1ea;border-top-right-radius:5px"></div>
<div class="a" style="left:191px;top:108px;width:510px;height:30px;background:linear-gradient(#98b3d3,#a3bddb 50%,#b9d1ea);border-top-right-radius:5px;border-top:1px solid #dfe8f2"></div>
<div class="a" style="left:700px;top:112px;width:1px;height:392px;background:#38c8f0;"></div>
<div class="a" style="left:191px;top:503px;width:510px;height:1px;background:#38c8f0;"></div>
<div class="a" style="left:191px;top:138px;width:504px;height:360px;background:#f0f0f0;"></div>
<svg width="0" height="0" style="left:0;top:0"><defs><linearGradient id="gb" x1="0" y1="0" x2="0" y2="1"><stop offset="0" stop-color="#c5d8ee"/><stop offset="0.45" stop-color="#b8cfe8"/><stop offset="0.46" stop-color="#9ab4d4"/><stop offset="1" stop-color="#a9c2df"/></linearGradient><linearGradient id="gr" x1="0" y1="0" x2="0" y2="1"><stop offset="0" stop-color="#e8a090"/><stop offset="0.45" stop-color="#d98070"/><stop offset="0.46" stop-color="#c04a30"/><stop offset="1" stop-color="#d06850"/></linearGradient></defs></svg>
<svg style="left:589px;top:116px" width="34" height="19" viewBox="0 0 34 19"><rect x="0.5" y="0.5" width="33" height="18" rx="2.5" fill="url(#gb)" stroke="#6e829c"/><rect x="10.5" y="8" width="13" height="4" rx="1" fill="#f8f8f8" stroke="#5a6a80" stroke-width="0.8"/></svg>
<svg style="left:624px;top:116px" width="34" height="19" viewBox="0 0 34 19"><rect x="0.5" y="0.5" width="33" height="18" rx="2.5" fill="url(#gb)" stroke="#6e829c"/><rect x="11.5" y="3.5" width="11" height="11" rx="1" fill="none" stroke="#5a6a80" stroke-width="3"/><rect x="11.5" y="3.5" width="11" height="11" rx="1" fill="none" stroke="#f8f8f8" stroke-width="1.8"/></svg>
<svg style="left:659px;top:116px" width="34" height="19" viewBox="0 0 34 19"><rect x="0.5" y="0.5" width="33" height="18" rx="2.5" fill="url(#gr)" stroke="#8a3a30"/><path d="M11 4 L23 15 M23 4 L11 15" stroke="#6a4040" stroke-width="4.5"/><path d="M11 4 L23 15 M23 4 L11 15" stroke="#f4f4f4" stroke-width="3"/></svg>
<div class="a" style="left:701px;top:302px;width:7px;height:7px;background:#ffffff;border:1px solid #000"></div>
<div class="a" style="left:372px;top:504px;width:7px;height:7px;background:#ffffff;border:1px solid #000"></div>
<div class="a" style="left:701px;top:504px;width:7px;height:7px;background:#ffffff;border:1px solid #000"></div>
<div class="a" style="left:318px;top:275px;width:116px;height:22px;background:#e1e1e1;border:1px solid #adadad"></div>
<span class="t" style="left:336.5px;top:279.02px;color:#000000;font-size:11.5px">Click To Say Hi</span>
<div class="a" style="left:310px;top:265px;width:130px;height:42px;background:transparent;border:4px solid #ec1c24"></div>
<div class="a" style="left:26px;top:195px;width:141px;height:27px;background:transparent;border:4px solid #ec1c24"></div>
<span class="t" style="left:386px;top:172.22px;color:#ec1c24;font-weight:bold;font-size:21px">Drag and Drop the</span>
<span class="t" style="left:386px;top:201.22px;color:#ec1c24;font-weight:bold;font-size:21px">Button Here!</span>
<svg style="left:0px;top:0px" width="1536" height="822" viewBox="0 0 1536 822"><path d="M170.3 190.1 C200 182 240 173 264 173.7 C285 174 300 183 312 200 C325 220 338 245 344 257.8" fill="none" stroke="#ec1c24" stroke-width="4" stroke-linecap="round"/><path d="M319.3 250.9 L344 257.8 L346 234.5" fill="none" stroke="#ec1c24" stroke-width="4" stroke-linecap="round" stroke-linejoin="round"/></svg>
<div class="a" style="left:1265px;top:71px;width:265px;height:22px;background:#3d3d3d;"></div>
<span class="t" style="left:1270px;top:74.34px">Solution Explorer</span>
<svg style="left:1480px;top:79px" width="8" height="4" viewBox="0 0 8 4"><path d="M0 0 H8 L4 4 Z" fill="#e0e0e0"/></svg>
<svg style="left:1497px;top:76px" width="8" height="12" viewBox="0 0 8 12"><path d="M1.5 0.5 H6.5 M2.5 0.5 V6 M5.5 0.5 V6 M0.5 6.5 H7.5 M4 6.5 V11.5" fill="none" stroke="#e0e0e0" stroke-width="1.2"/></svg>
<svg style="left:1513px;top:77px" width="10" height="10" viewBox="0 0 10 10"><path d="M0.5 0.5 L9.5 9.5 M9.5 0.5 L0.5 9.5" stroke="#e8e8e8" stroke-width="1.2"/></svg>
<svg style="left:1273px;top:99px" width="14" height="14" viewBox="0 0 14 14"><circle cx="7" cy="7" r="6.2" fill="none" stroke="#444444" stroke-width="1.1"/><path d="M3.5 7 H10.5 M3.5 7 L6.5 4 M3.5 7 L6.5 10" stroke="#444444" stroke-width="1.1" fill="none"/></svg>
<svg style="left:1295px;top:99px" width="14" height="14" viewBox="0 0 14 14"><circle cx="7" cy="7" r="6.2" fill="none" stroke="#444444" stroke-width="1.1"/><path d="M3.5 7 H10.5 M10.5 7 L7.5 4 M10.5 7 L7.5 10" stroke="#444444" stroke-width="1.1" fill="none"/></svg>
<svg style="left:1316px;top:99px" width="15" height="15" viewBox="0 0 15 15"><path d="M1 7.5 L7.5 1 L14 7.5 M2.5 6 V14 H6 V10 H9 V14 H12.5 V6" fill="none" stroke="#c8c8c8" stroke-width="1.2" stroke-linejoin="round"/></svg>
<svg style="left:1337px;top:99px" width="17" height="16" viewBox="0 0 17 16"><rect x="6.5" y="0.5" width="10" height="11" rx="1" fill="#1f1f1f" stroke="#c8c8c8" stroke-width="1.1"/><path d="M10 3 H14 M10 5.5 H14 M10 8 H14" stroke="#c8c8c8"/><path d="M1.2 9 L9.5 14.5 V6.5 L1.2 12 Z" fill="none" stroke="#9a6ae8" stroke-width="1.9" stroke-linejoin="round"/></svg>
<div class="a" style="left:1360px;top:96px;width:1px;height:19px;background:#3a3a3a;"></div>
<svg style="left:1368px;top:97px" width="15" height="16" viewBox="0 0 15 16"><path d="M0 0 H5 L3 2.5 V5 L2 5 V2.5 Z" fill="#4c9ee8"/><circle cx="8.5" cy="10" r="5.5" fill="none" stroke="#c8c8c8" stroke-width="1.2"/><path d="M8.5 6.5 V10 H11" fill="none" stroke="#c8c8c8" stroke-width="1.1"/></svg>
<svg style="left:1390px;top:105px" width="6" height="3" viewBox="0 0 6 3"><path d="M0 0 H6 L3 3 Z" fill="#e0e0e0"/></svg>
<svg style="left:1401px;top:99px" width="16" height="15" viewBox="0 0 16 15"><path d="M2 6.5 C3 3 5.5 1.5 8.5 1.5 C11 1.5 13 3 14 5 M1.5 9 C2.5 12 5 13.5 8 13.5 C10.5 13.5 12.5 12 13.5 9" fill="none" stroke="#c8c8c8" stroke-width="1.3"/><path d="M14.5 2 V5.5 H11 M1 12.5 V9 H4.5" fill="none" stroke="#c8c8c8" stroke-width="1.3"/></svg>
<svg style="left:1422px;top:98px" width="17" height="16" viewBox="0 0 17 16"><rect x="0.7" y="2.7" width="13" height="12.6" rx="1" fill="#2a2a2a" stroke="#c8c8c8" stroke-width="1.2"/><path d="M2.5 1 H14.5 L16 2.5 V13" fill="none" stroke="#c8c8c8" stroke-width="1"/><path d="M3.5 9 H11" stroke="#c8c8c8" stroke-width="1.4"/></svg>
<svg style="left:1444px;top:99px" width="15" height="15" viewBox="0 0 15 15"><rect x="6.5" y="0.5" width="8" height="9" rx="1" fill="none" stroke="#c8c8c8" stroke-width="1"/><rect x="0.5" y="3" width="7" height="9" rx="1" fill="none" stroke="#c8c8c8" stroke-width="1"/><rect x="3.5" y="5.5" width="7" height="9" rx="1" fill="#1f1f1f" stroke="#c8c8c8" stroke-width="1.1"/></svg>
<div class="a" style="left:1467px;top:96px;width:1px;height:19px;background:#3a3a3a;"></div>
<svg style="left:1474px;top:99px" width="15" height="15" viewBox="0 0 15 15"><path d="M1.5 13.5 L8 7" stroke="#c8c8c8" stroke-width="3" stroke-linecap="round"/><path d="M1.5 13.5 L8 7" stroke="#1f1f1f" stroke-width="1" stroke-linecap="round"/><path d="M7 6.5 C6 3.5 8 0.5 11.5 1 L9.5 3.5 L11 5 L13.8 3 C14.5 6.5 11.5 8.5 8.5 7.5" fill="#1f1f1f" stroke="#c8c8c8" stroke-width="1.3"/></svg>
<div class="a" style="left:1493px;top:94px;width:22px;height:24px;background:#1a1a1a;border:1px solid #6a6a6a"></div>
<svg style="left:1495px;top:101px" width="17" height="10" viewBox="0 0 17 10"><path d="M0.5 9 H5 M2.5 9 V6 H11.5 C12 6 12.5 6.5 12.5 7 V8 C12.5 8.5 12 9 11.5 9 H5" fill="none" stroke="#c8c8c8" stroke-width="1"/><rect x="11" y="0" width="1.4" height="2" fill="#d8b860"/><rect x="13.5" y="2" width="2" height="1.4" fill="#d8b860"/><rect x="14" y="5" width="1.5" height="1.5" fill="#d8b860"/></svg>
<div class="a" style="left:1265px;top:120px;width:265px;height:22px;background:#3b3b3b;"></div>
<span class="t" style="left:1271px;top:124.04px;color:#a9a9a9">Search Solution Explorer (Ctrl+;)</span>
<svg style="left:1501px;top:124px" width="15" height="13" viewBox="0 0 15 13"><circle cx="10" cy="4.8" r="3.8" fill="none" stroke="#e0e0e0" stroke-width="1.8"/><path d="M7.3 7.6 L1.5 12" stroke="#e0e0e0" stroke-width="2.4" stroke-linecap="round"/></svg>
<svg style="left:1519px;top:130px" width="5" height="3" viewBox="0 0 5 3"><path d="M0 0 H5 L2.5 2.5 Z" fill="#e0e0e0"/></svg>
<div class="a" style="left:1266px;top:239px;width:263px;height:19px;background:#333333;"></div>
<svg style="left:1280px;top:146px" width="16" height="15" viewBox="0 0 16 15"><rect x="0.7" y="0.7" width="13" height="13.6" rx="1" fill="none" stroke="#c8c8c8" stroke-width="1.2"/><path d="M0.7 3.5 H13.7" stroke="#c8c8c8" stroke-width="1.2"/><path d="M6.5 10 L14 15 V8 L6.5 13 Z" fill="none" stroke="#9a6ae8" stroke-width="1.9" stroke-linejoin="round"/></svg>
<span class="t" style="left:1301.5px;top:145.64px">Solution 'WinFormsApp2' (1 of 1 project)</span>
<svg style="left:1277px;top:171px" width="6" height="6" viewBox="0 0 6 6"><path d="M6 0 V6 H0 Z" fill="#e0e0e0"/></svg>
<svg style="left:1299px;top:166px" width="15" height="14" viewBox="0 0 15 14"><rect x="0.6" y="0.6" width="13.8" height="12.8" rx="1" fill="none" stroke="#c8c8c8" stroke-width="1.1"/><text x="7.5" y="10" font-size="7.5" font-family="Liberation Sans" font-weight="bold" fill="#4c9ee8" text-anchor="middle">VB</text></svg>
<span class="t" style="left:1319.3px;top:164.64px;font-weight:bold">WinFormsApp2</span>
<svg style="left:1295px;top:187px" width="5" height="9" viewBox="0 0 5 9"><path d="M0.6 0.6 L4.5 4.5 L0.6 8.4 Z" fill="none" stroke="#d0d0d0" stroke-width="1.1"/></svg>
<svg style="left:1315px;top:186px" width="17" height="13" viewBox="0 0 17 13"><rect x="0.6" y="3.6" width="6" height="5" fill="none" stroke="#c8c8c8" stroke-width="1.1"/><rect x="8.6" y="0.6" width="6" height="5" fill="none" stroke="#c8c8c8" stroke-width="1.1"/><rect x="8.6" y="7.6" width="6" height="5" fill="none" stroke="#c8c8c8" stroke-width="1.1"/><path d="M6.6 6 H8.6" stroke="#c8c8c8"/><rect x="1.5" y="8.5" width="2" height="2" fill="#c8c8c8"/></svg>
<span class="t" style="left:1337.4px;top:183.64px">Dependencies</span>
<svg style="left:1315px;top:204px" width="17" height="14" viewBox="0 0 17 14"><path d="M3.5 5 V1.5 H7.5 L9 3 H15.5 V12.5 H8" fill="none" stroke="#d8bb7e" stroke-width="1.1"/><path d="M3.5 5 H15.5" stroke="#d8bb7e" stroke-width="1.1"/><path d="M1 13.5 L5 9.5 M4 7.5 C4 6 6 5.5 7 6.5 L5.5 8 L6.5 9 L8 7.5 C9 8.5 8.5 10.5 7 10.5" fill="none" stroke="#e8e8e8" stroke-width="1.3"/></svg>
<span class="t" style="left:1337.4px;top:202.64px">My Project</span>
<svg style="left:1295px;top:225px" width="5" height="9" viewBox="0 0 5 9"><path d="M0.6 0.6 L4.5 4.5 L0.6 8.4 Z" fill="none" stroke="#d0d0d0" stroke-width="1.1"/></svg>
<span class="t" style="left:1316.5px;top:222.59px;color:#4c9ee8;font-weight:bold;font-size:11px">VB</span>
<span class="t" style="left:1337.4px;top:222.24px">ApplicationEvents.vb</span>
<svg style="left:1295px;top:246px" width="6.5" height="6.5" viewBox="0 0 6.5 6.5"><path d="M6.5 0 V6.5 H0 Z" fill="#e0e0e0"/></svg>
<svg style="left:1317px;top:242px" width="15" height="14" viewBox="0 0 15 14"><rect x="0.7" y="0.7" width="13.6" height="12.6" rx="1.2" fill="none" stroke="#a8a8a8" stroke-width="1.2"/><path d="M0.7 3.5 H14.3" stroke="#a8a8a8" stroke-width="1.2"/><rect x="2.5" y="7.5" width="4" height="4" fill="none" stroke="#9a6ae8" stroke-width="1.2"/><rect x="8.5" y="5.5" width="3.5" height="3.5" fill="none" stroke="#9a6ae8" stroke-width="1.2"/></svg>
<span class="t" style="left:1337.4px;top:241.14px">Form1.vb</span>
<svg style="left:1313px;top:263px" width="5" height="9" viewBox="0 0 5 9"><path d="M0.6 0.6 L4.5 4.5 L0.6 8.4 Z" fill="none" stroke="#d0d0d0" stroke-width="1.1"/></svg>
<span class="t" style="left:1335px;top:260.49px;color:#4c9ee8;font-weight:bold;font-size:11px">VB</span>
<span class="t" style="left:1355px;top:260.14px">Form1.Designer.vb</span>
<svg style="left:1336px;top:281px" width="13" height="15" viewBox="0 0 13 15"><path d="M4.5 0.6 H9.5 L12.4 3.5 V10.4 H9" fill="none" stroke="#c8c8c8" stroke-width="1.1"/><path d="M0.6 4.5 H6 L9 7.5 V13.4 H0.6 Z" fill="#1f1f1f" stroke="#c8c8c8" stroke-width="1.1"/><path d="M4.5 0.6 V4.5" stroke="#c8c8c8" stroke-width="1.1"/></svg>
<span class="t" style="left:1355px;top:279.44px">Form1.resx</span>
<div class="a" style="left:1368px;top:467px;width:73px;height:17px;background:#2d2d2d;"></div>
<div class="a" style="left:1443px;top:467px;width:64px;height:17px;background:#2d2d2d;"></div>
<span class="t" style="left:1271.4px;top:468.04px">Solution Explorer</span>
<span class="t" style="left:1373.5px;top:468.04px">Git Changes</span>
<span class="t" style="left:1448px;top:468.04px">Class View</span>
<div class="a" style="left:1267px;top:484px;width:100px;height:1.5px;background:#d0d0d0;"></div>
<div class="a" style="left:1265px;top:492px;width:265px;height:23px;background:#3d3d3d;"></div>
<span class="t" style="left:1270px;top:495.64px">Properties</span>
<svg style="left:1480px;top:501px" width="8" height="4" viewBox="0 0 8 4"><path d="M0 0 H8 L4 4 Z" fill="#e0e0e0"/></svg>
<svg style="left:1497px;top:498px" width="8" height="12" viewBox="0 0 8 12"><path d="M1.5 0.5 H6.5 M2.5 0.5 V6 M5.5 0.5 V6 M0.5 6.5 H7.5 M4 6.5 V11.5" fill="none" stroke="#e0e0e0" stroke-width="1.2"/></svg>
<svg style="left:1513px;top:499px" width="10" height="10" viewBox="0 0 10 10"><path d="M0.5 0.5 L9.5 9.5 M9.5 0.5 L0.5 9.5" stroke="#e8e8e8" stroke-width="1.2"/></svg>
<div class="a" style="left:1265px;top:515px;width:265px;height:22px;background:#3d3d3d;"></div>
<div class="a" style="left:1265px;top:485.5px;width:265px;height:6.5px;background:#2d2d2d;"></div>
<span class="t" style="left:1273px;top:518.84px;font-weight:bold">Form1</span>
<span class="t" style="left:1315.9px;top:518.84px">System.Windows.Forms.Form</span>
<svg style="left:1519px;top:525px" width="6" height="3" viewBox="0 0 6 3"><path d="M0 0 H6 L3 3 Z" fill="#d0d0d0"/></svg>
<div class="a" style="left:1268px;top:538px;width:24px;height:23px;background:#1a1a1a;border:1px solid #6a6a6a"></div>
<svg style="left:1268px;top:538px" width="24" height="23" viewBox="0 0 24 23"><rect x="5.5" y="5.5" width="4" height="4" fill="none" stroke="#c8c8c8"/><rect x="5.5" y="13.5" width="4" height="4" fill="none" stroke="#c8c8c8"/><path d="M7.5 6.5 V8.5 M6.5 7.5 H8.5 M6.5 15.5 H8.5" stroke="#c8c8c8" stroke-width="0.8"/><path d="M11 5 H16 M11 7.5 H16 M11 10 H16 M11 12.5 H16 M11 15 H16 M11 17.5 H16" stroke="#9a9a9a" stroke-width="1.4"/><path d="M17.5 7.5 H19.5 M17.5 10 H19.5 M17.5 12.5 H19.5 M17.5 17.5 H19.5" stroke="#9a9a9a" stroke-width="1.4"/></svg>
<svg style="left:1295px;top:541px" width="17" height="17" viewBox="0 0 17 17"><rect x="0.5" y="0.5" width="8" height="8" fill="none" stroke="#c8c8c8"/><path d="M2.3 7 L4.5 2 L6.7 7 M3.2 5.3 H5.8" fill="none" stroke="#c8c8c8" stroke-width="0.9"/><rect x="0.5" y="9.5" width="8" height="7" fill="none" stroke="#c8c8c8"/><path d="M2.5 11.3 H6.5 L2.5 15 H6.5" fill="none" stroke="#c8c8c8" stroke-width="0.9"/><path d="M10 3.5 H13.8 V10 H16.3 L11.9 15.8 L7.5 10 H10 Z" fill="#4aaaf2" stroke="#d8d8d8" stroke-width="0.7"/></svg>
<div class="a" style="left:1317px;top:540px;width:1px;height:20px;background:#3a3a3a;"></div>
<div class="a" style="left:1320px;top:538px;width:23px;height:23px;background:#1a1a1a;border:1px solid #6a6a6a"></div>
<svg style="left:1320px;top:538px" width="23" height="23" viewBox="0 0 23 23"><path d="M9.5 3.5 H16.5 L19.5 6.5 V19.5 H9.5" fill="none" stroke="#c8c8c8" stroke-width="1.1"/><path d="M16.5 3.5 V6.5 H19.5" fill="none" stroke="#c8c8c8" stroke-width="0.9"/><path d="M4 5 V8 C4 10.5 9 10.5 9 8 V5" fill="none" stroke="#c8c8c8" stroke-width="1.4"/><path d="M6.5 10 V19" stroke="#c8c8c8" stroke-width="1.8"/></svg>
<svg style="left:1348px;top:541px" width="15" height="17" viewBox="0 0 15 17"><path d="M7 0.5 H13.8 L9.5 6.3 H13.2 L3 16.5 L6.3 8.6 H2.6 Z" fill="#f2b46e" stroke="#d0d0d0" stroke-width="0.8" stroke-linejoin="round"/></svg>
<div class="a" style="left:1369px;top:540px;width:1px;height:20px;background:#3a3a3a;"></div>
<svg style="left:1374px;top:541px" width="17" height="17" viewBox="0 0 17 17"><path d="M2.5 14.5 L9 8" stroke="#7a7a7a" stroke-width="3.6" stroke-linecap="round"/><circle cx="11.8" cy="5.2" r="4.6" fill="#7a7a7a"/><circle cx="12.6" cy="4.4" r="1.2" fill="#3a3a3a"/></svg>
<div class="a" style="left:1265px;top:563px;width:248px;height:168px;background:#2b2b2b;"></div>
<div class="a" style="left:1280px;top:564.5px;width:113px;height:17px;background:#1f1f1f;"></div>
<div class="a" style="left:1394px;top:564.5px;width:117.5px;height:17px;background:#1f1f1f;"></div>
<div class="a" style="left:1284px;top:565.74px;width:109px;height:16px;overflow:hidden"><span class="t" style="left:0;top:0">BackgroundImage</span></div>
<div class="a" style="left:1395px;top:565.1px;width:20px;height:16px;background:#1f1f1f;border:1px solid #000"></div>
<span class="t" style="left:1422.4px;top:565.74px">(none)</span>
<div class="a" style="left:1280px;top:582.85px;width:113px;height:17px;background:#1f1f1f;"></div>
<div class="a" style="left:1394px;top:582.85px;width:117.5px;height:17px;background:#1f1f1f;"></div>
<div class="a" style="left:1284px;top:584.09px;width:109px;height:16px;overflow:hidden"><span class="t" style="left:0;top:0">BackgroundImageLa</span></div>
<span class="t" style="left:1396.9px;top:584.09px">Tile</span>
<div class="a" style="left:1280px;top:601.2px;width:113px;height:17px;background:#1f1f1f;"></div>
<div class="a" style="left:1394px;top:601.2px;width:117.5px;height:17px;background:#1f1f1f;"></div>
<div class="a" style="left:1284px;top:602.44px;width:109px;height:16px;overflow:hidden"><span class="t" style="left:0;top:0">Cursor</span></div>
<span class="t" style="left:1396.9px;top:602.44px">Default</span>
<div class="a" style="left:1280px;top:619.55px;width:113px;height:17px;background:#1f1f1f;"></div>
<div class="a" style="left:1394px;top:619.55px;width:117.5px;height:17px;background:#1f1f1f;"></div>
<div class="a" style="left:1284px;top:620.79px;width:109px;height:16px;overflow:hidden"><span class="t" style="left:0;top:0">Font</span></div>
<span class="t" style="left:1396.9px;top:620.79px">Segoe UI, 9pt</span>
<div class="a" style="left:1280px;top:637.9px;width:113px;height:17px;background:#1f1f1f;"></div>
<div class="a" style="left:1394px;top:637.9px;width:117.5px;height:17px;background:#1f1f1f;"></div>
<div class="a" style="left:1284px;top:639.14px;width:109px;height:16px;overflow:hidden"><span class="t" style="left:0;top:0">ForeColor</span></div>
<div class="a" style="left:1395px;top:638.5px;width:20px;height:16px;background:#000000;border:1px solid #000"></div>
<span class="t" style="left:1422.4px;top:639.14px">ControlText</span>
<div class="a" style="left:1280px;top:656.25px;width:113px;height:17px;background:#1f1f1f;"></div>
<div class="a" style="left:1394px;top:656.25px;width:117.5px;height:17px;background:#1f1f1f;"></div>
<div class="a" style="left:1284px;top:657.49px;width:109px;height:16px;overflow:hidden"><span class="t" style="left:0;top:0">FormBorderStyle</span></div>
<span class="t" style="left:1396.9px;top:657.49px">Sizable</span>
<div class="a" style="left:1280px;top:674.6px;width:113px;height:17px;background:#1f1f1f;"></div>
<div class="a" style="left:1394px;top:674.6px;width:117.5px;height:17px;background:#1f1f1f;"></div>
<div class="a" style="left:1284px;top:675.84px;width:109px;height:16px;overflow:hidden"><span class="t" style="left:0;top:0">RightToLeft</span></div>
<span class="t" style="left:1396.9px;top:675.84px">No</span>
<div class="a" style="left:1280px;top:692.95px;width:113px;height:17px;background:#1f1f1f;"></div>
<div class="a" style="left:1394px;top:692.95px;width:117.5px;height:17px;background:#1f1f1f;"></div>
<div class="a" style="left:1284px;top:694.19px;width:109px;height:16px;overflow:hidden"><span class="t" style="left:0;top:0">RightToLeftLayout</span></div>
<span class="t" style="left:1396.9px;top:694.19px">False</span>
<div class="a" style="left:1266px;top:711.3px;width:128px;height:19px;background:#2e2e2e;"></div>
<div class="a" style="left:1394px;top:711.3px;width:117.5px;height:18px;background:#1f1f1f;"></div>
<div class="a" style="left:1284px;top:712.54px;width:109px;height:16px;overflow:hidden"><span class="t" style="left:0;top:0">Text</span></div>
<span class="t" style="left:1396.6px;top:712.68px;font-weight:bold;font-size:11.6px">itsourcecode.com</span>
<svg style="left:1269px;top:624px" width="10" height="10" viewBox="0 0 10 10"><rect x="0.5" y="0.5" width="9" height="9" fill="none" stroke="#d0d0d0"/><path d="M2.5 5 H7.5 M5 2.5 V7.5" stroke="#d0d0d0"/></svg>
<div class="a" style="left:1511.5px;top:563px;width:18.5px;height:168px;background:#2b2b2b;"></div>
<svg style="left:1516px;top:570px" width="9" height="5" viewBox="0 0 9 5"><path d="M0 5 L4.5 0 L9 5 Z" fill="#9a9a9a"/></svg>
<div class="a" style="left:1516px;top:592px;width:9px;height:19px;background:#4d4d4d;"></div>
<svg style="left:1516px;top:720px" width="9" height="5" viewBox="0 0 9 5"><path d="M0 0 L4.5 5 L9 0 Z" fill="#9a9a9a"/></svg>
<div class="a" style="left:1265px;top:731px;width:265px;height:62px;background:#1f1f1f;border:1px solid #333"></div>
<span class="t" style="left:1273.5px;top:737.34px;font-weight:bold">Text</span>
<span class="t" style="left:1273.5px;top:755.14px">The text associated with the control.</span>
<div class="a" style="left:0px;top:799px;width:1536px;height:23px;background:#434343;"></div>
<svg style="left:3px;top:806px" width="16" height="12" viewBox="0 0 16 12"><path d="M4 0.7 H15.3 L12.5 11.3 H0.8 Z" fill="none" stroke="#d8d8d8" stroke-width="1.2" stroke-linejoin="round"/></svg>
<span class="t" style="left:27.4px;top:804.64px">Ready</span>
<svg style="left:1176px;top:806px" width="9" height="12" viewBox="0 0 9 12"><path d="M4.5 11.5 V1.5 M0.8 5 L4.5 1.2 L8.2 5" fill="none" stroke="#e8e8e8" stroke-width="1.5"/></svg>
<span class="t" style="left:1194.2px;top:804.74px">Add to Source Control</span>
<svg style="left:1319px;top:809px" width="8" height="5" viewBox="0 0 8 5"><path d="M0 5 L4 0 L8 5 Z" fill="#f0f0f0"/></svg>
<svg style="left:1350px;top:803px" width="15" height="15" viewBox="0 0 15 15"><path d="M7.5 0.5 L14.5 7.5 L7.5 14.5 L0.5 7.5 Z" fill="#d0d0d0"/><circle cx="6" cy="5" r="1.3" fill="#434343"/><circle cx="9.5" cy="8.5" r="1.3" fill="#434343"/><path d="M6 5 V11 M6 5 L9.5 8.5" stroke="#434343" stroke-width="1"/></svg>
<span class="t" style="left:1370.2px;top:804.74px">Select Repository</span>
<svg style="left:1470px;top:809px" width="8" height="5" viewBox="0 0 8 5"><path d="M0 5 L4 0 L8 5 Z" fill="#f0f0f0"/></svg>
<svg style="left:1498px;top:804px" width="20" height="18" viewBox="0 0 20 18"><path d="M1.5 12 C2.8 10.5 3 9 3 6.5 C3 3.5 5 1.2 7.3 1.2 C9.6 1.2 11.6 3.5 11.6 6.5 C11.6 9 11.8 10.5 13.1 12 Z" fill="none" stroke="#d8b860" stroke-width="1.2" stroke-linejoin="round"/><circle cx="13.6" cy="12" r="5.8" fill="#f2889a"/><text x="13.6" y="15.5" font-size="10" font-family="Liberation Sans" fill="#2a2a2a" text-anchor="middle">2</text></svg>
</body></html>
